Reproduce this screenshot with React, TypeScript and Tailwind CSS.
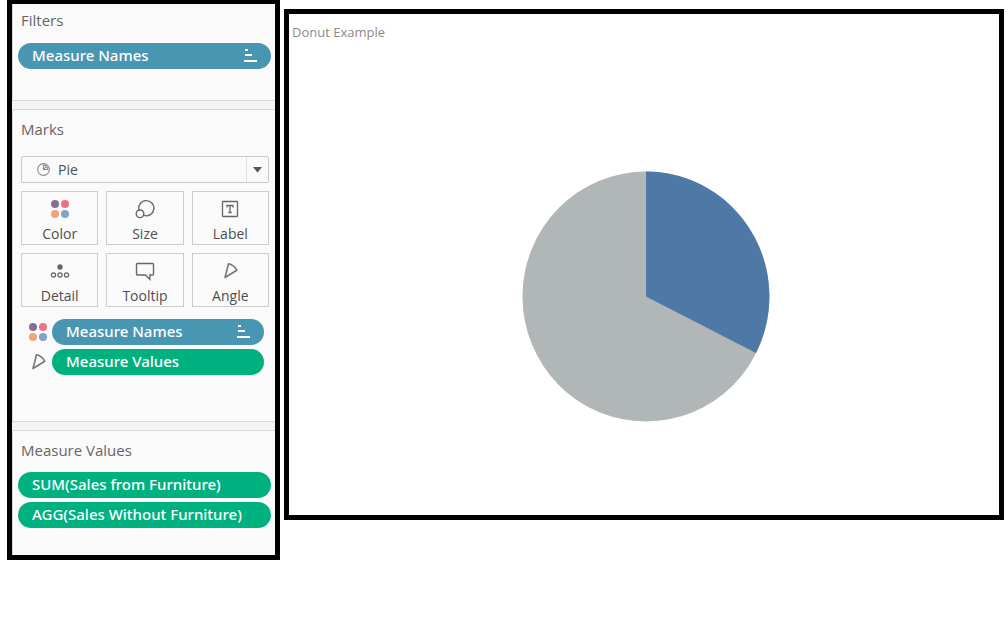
import { useState } from "react";
import type { ReactNode } from "react";

function ColorIcon() {
  return (
    <svg width="20" height="20" viewBox="0 0 20 20" className="shrink-0" aria-hidden="true">
      <circle cx="5" cy="5" r="4" fill="#86708f" />
      <circle cx="15" cy="5" r="4" fill="#ea7483" />
      <circle cx="5" cy="15" r="4" fill="#f1a477" />
      <circle cx="15" cy="15" r="4" fill="#7fa3cd" />
    </svg>
  );
}

function SizeIcon() {
  return (
    <svg width="20" height="20" viewBox="0 0 20 20" fill="none" stroke="#666" strokeWidth="1.4" aria-hidden="true">
      <path d="M4 11.2a7.6 7.6 0 1 1 4.9 5.2" />
      <circle cx="5" cy="14.8" r="3.8" />
    </svg>
  );
}

function LabelIcon() {
  return (
    <svg width="20" height="20" viewBox="0 0 20 20" fill="none" stroke="#666" strokeWidth="1.3" aria-hidden="true">
      <rect x="2.5" y="2.5" width="15" height="15" rx="0.5" />
      <path d="M7 8.5V6.5h6v2M10 6.5v7M8.3 13.5h3.4" strokeWidth="1.3" />
    </svg>
  );
}

function DetailIcon() {
  return (
    <svg width="20" height="20" viewBox="0 0 20 20" fill="none" stroke="#666" strokeWidth="1.2" aria-hidden="true">
      <circle cx="10" cy="6" r="2.7" fill="#666" stroke="none" />
      <circle cx="3.5" cy="14" r="2.1" />
      <circle cx="10" cy="14" r="2.1" />
      <circle cx="16.5" cy="14" r="2.1" />
    </svg>
  );
}

function TooltipIcon() {
  return (
    <svg width="20" height="20" viewBox="0 0 20 20" fill="none" stroke="#666" strokeWidth="1.4" aria-hidden="true">
      <path d="M2.5 2.5h15a1 1 0 0 1 1 1V13a1 1 0 0 1-1 1h-2.6v4.4L10.5 14h-8a1 1 0 0 1-1-1V3.5a1 1 0 0 1 1-1z" />
    </svg>
  );
}

function AngleIcon() {
  return (
    <svg width="20" height="20" viewBox="0 0 20 20" fill="none" stroke="#777" strokeWidth="1.6" strokeLinejoin="round" className="shrink-0" aria-hidden="true">
      <path d="M8.5 2.8L5 16.5L16.8 9.2C15 6 12 3.5 8.5 2.8z" />
    </svg>
  );
}

function PieIcon() {
  return (
    <svg width="13" height="13" viewBox="0 0 12 12" fill="none" stroke="#8a8a8a" aria-hidden="true">
      <circle cx="6" cy="6" r="5.4" />
      <path d="M6 2v4h4C10 3.8 8.2 2 6 2zM6 6l2.8-2.8" />
    </svg>
  );
}

function SortIcon() {
  return (
    <svg width="13" height="16" viewBox="0 0 13 16" fill="#fff" aria-hidden="true">
      <rect x="1" y="2" width="3" height="2" />
      <rect x="1" y="7" width="7" height="2" />
      <rect x="0" y="13" width="13" height="2" />
    </svg>
  );
}

const blue = "bg-[#4996b2]";
const green = "bg-[#00b180]";

function Pill({ label, color, sorted }: { label: string; color: string; sorted?: boolean }) {
  return (
    <button
      type="button"
      className={`flex h-[26px] w-full items-center justify-between rounded-full pr-[14px] pb-0.5 pl-[14px] font-['Noto_Sans',sans-serif] text-[15px] leading-5 font-medium text-white ${color}`}
    >
      {label}
      {sorted && <SortIcon />}
    </button>
  );
}

function Shelf({ title, className, children }: { title: string; className: string; children: ReactNode }) {
  return (
    <section className={`border-l border-[#d9d9d9] bg-[#fafafa] ${className}`}>
      <h2 className="pl-2 text-[15px] leading-5 text-[#666]">{title}</h2>
      {children}
    </section>
  );
}

const cards = [
  { label: "Color", icon: <ColorIcon /> },
  { label: "Size", icon: <SizeIcon /> },
  { label: "Label", icon: <LabelIcon /> },
  { label: "Detail", icon: <DetailIcon /> },
  { label: "Tooltip", icon: <TooltipIcon /> },
  { label: "Angle", icon: <AngleIcon /> },
];

export default function App() {
  const [mark, setMark] = useState("Pie");

  return (
    <div className="flex min-h-screen items-start gap-1 bg-white pr-1 pl-[7px] font-['Open_Sans',sans-serif]">
      <aside className="w-[273px] shrink-0 border-5 border-t-4 border-black bg-[#f4f4f4]">
        <Shelf title="Filters" className="border-b pt-[6px] pb-[31px]">
          <div className="mt-[13px] pr-1 pl-[5px]">
            <Pill label="Measure Names" color={blue} sorted />
          </div>
        </Shelf>

        <Shelf title="Marks" className="mt-2 border-y pt-[9px] pb-[46px]">
          <div className="mt-[17px] pr-[6px] pl-2">
            <div className="relative">
              <select
                aria-label="Mark type"
                value={mark}
                onChange={(e) => setMark(e.target.value)}
                className="block h-[27px] w-full appearance-none rounded-xs border border-[#c9c9c9] bg-[#fafafa] pl-9 text-[14px] leading-5 text-[#4f4f4f]"
              >
                <option>Pie</option>
                <option>Bar</option>
                <option>Line</option>
              </select>
              <span className="pointer-events-none absolute inset-y-0 left-4 flex items-center">
                <PieIcon />
              </span>
              <span className="pointer-events-none absolute inset-y-px right-px flex w-[22px] items-center justify-center border-l border-[#dedede]">
                <svg width="9" height="6" viewBox="0 0 9 6" aria-hidden="true">
                  <path d="M0 0h9L4.5 5.5z" fill="#555" />
                </svg>
              </span>
            </div>

            <div className="mt-2 grid grid-cols-3 gap-2">
              {cards.map((c) => (
                <button
                  key={c.label}
                  type="button"
                  className="flex h-[54px] flex-col items-center gap-[5px] border border-[#cdcdcd] pt-[7px] text-[14px] leading-5 text-[#4f4f4f]"
                >
                  {c.icon}
                  {c.label}
                </button>
              ))}
            </div>
          </div>

          <div className="mt-3 flex flex-col gap-1 pr-[11px] pl-[15px]">
            <div className="flex items-center gap-1">
              <ColorIcon />
              <Pill label="Measure Names" color={blue} sorted />
            </div>
            <div className="flex items-center gap-1">
              <AngleIcon />
              <Pill label="Measure Values" color={green} />
            </div>
          </div>
        </Shelf>

        <Shelf title="Measure Values" className="mt-2 border-t pt-[9px] pb-[27px]">
          <div className="mt-3 flex flex-col gap-1 pr-1 pl-[5px]">
            <Pill label="SUM(Sales from Furniture)" color={green} />
            <Pill label="AGG(Sales Without Furniture)" color={green} />
          </div>
        </Shelf>
      </aside>

      <main className="mt-[9px] min-w-0 flex-1 border-5 border-black bg-white pb-[93px]">
        <h1 className="pt-2 pl-[3px] text-[13px] leading-5 text-[#8a8a8a]">
          Donut Example
        </h1>
        <div className="mt-[129px] flex justify-center pl-1">
          <svg width="248" height="251" viewBox="0 0 248 251" role="img" aria-label="Donut Example">
            <ellipse cx="124" cy="125.5" rx="123.5" ry="125" fill="#b1b6b7" />
            <path d="M124 125.5V0.5A123.5 125 0 0 1 234 182z" fill="#4e78a6" />
          </svg>
        </div>
      </main>
    </div>
  );
}
